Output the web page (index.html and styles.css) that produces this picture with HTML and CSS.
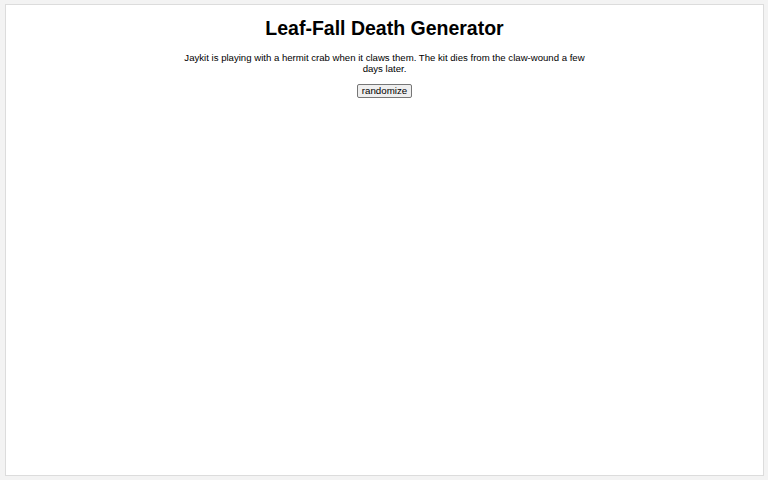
FILE: index.html
```html
<!DOCTYPE html>
<html lang="en">
<head>
<meta charset="utf-8">
<title>Leaf-Fall Death Generator</title>
<link rel="stylesheet" href="styles.css">
</head>
<body>
<main class="page">
  <h1 class="title">Leaf-Fall Death Generator</h1>
  <p class="result">Jaykit is playing with a hermit crab when it claws them. The kit dies from the claw-wound a few days later.</p>
  <button class="btn" type="button">randomize</button>
</main>
</body>
</html>
```

FILE: styles.css
```css
html, body {
  margin: 0;
  height: 100%;
}

body {
  background: #f3f3f3;
  padding: 4px 4px 4px 5px;
  box-sizing: border-box;
  font-family: "Liberation Sans", Arial, sans-serif;
  color: #000;
}

.page {
  background: #fff;
  border: 1px solid #dcdcdc;
  height: 100%;
  box-sizing: border-box;
  display: flex;
  flex-direction: column;
  align-items: center;
  padding-top: 11px;
}

.title {
  font-size: 19.5px;
  font-weight: bold;
  margin: 0;
  line-height: 24px;
}

.result {
  font-size: 9.6px;
  line-height: 11px;
  max-width: 404px;
  text-align: center;
  margin: 12px 0 0;
}

.btn {
  margin-top: 10px;
  font-family: "Liberation Sans", Arial, sans-serif;
  font-size: 9.75px;
  line-height: 12px;
  padding: 0 4px;
  background: #efefef;
  border: 1px solid #767676;
  border-radius: 2px;
  color: #000;
}
```
